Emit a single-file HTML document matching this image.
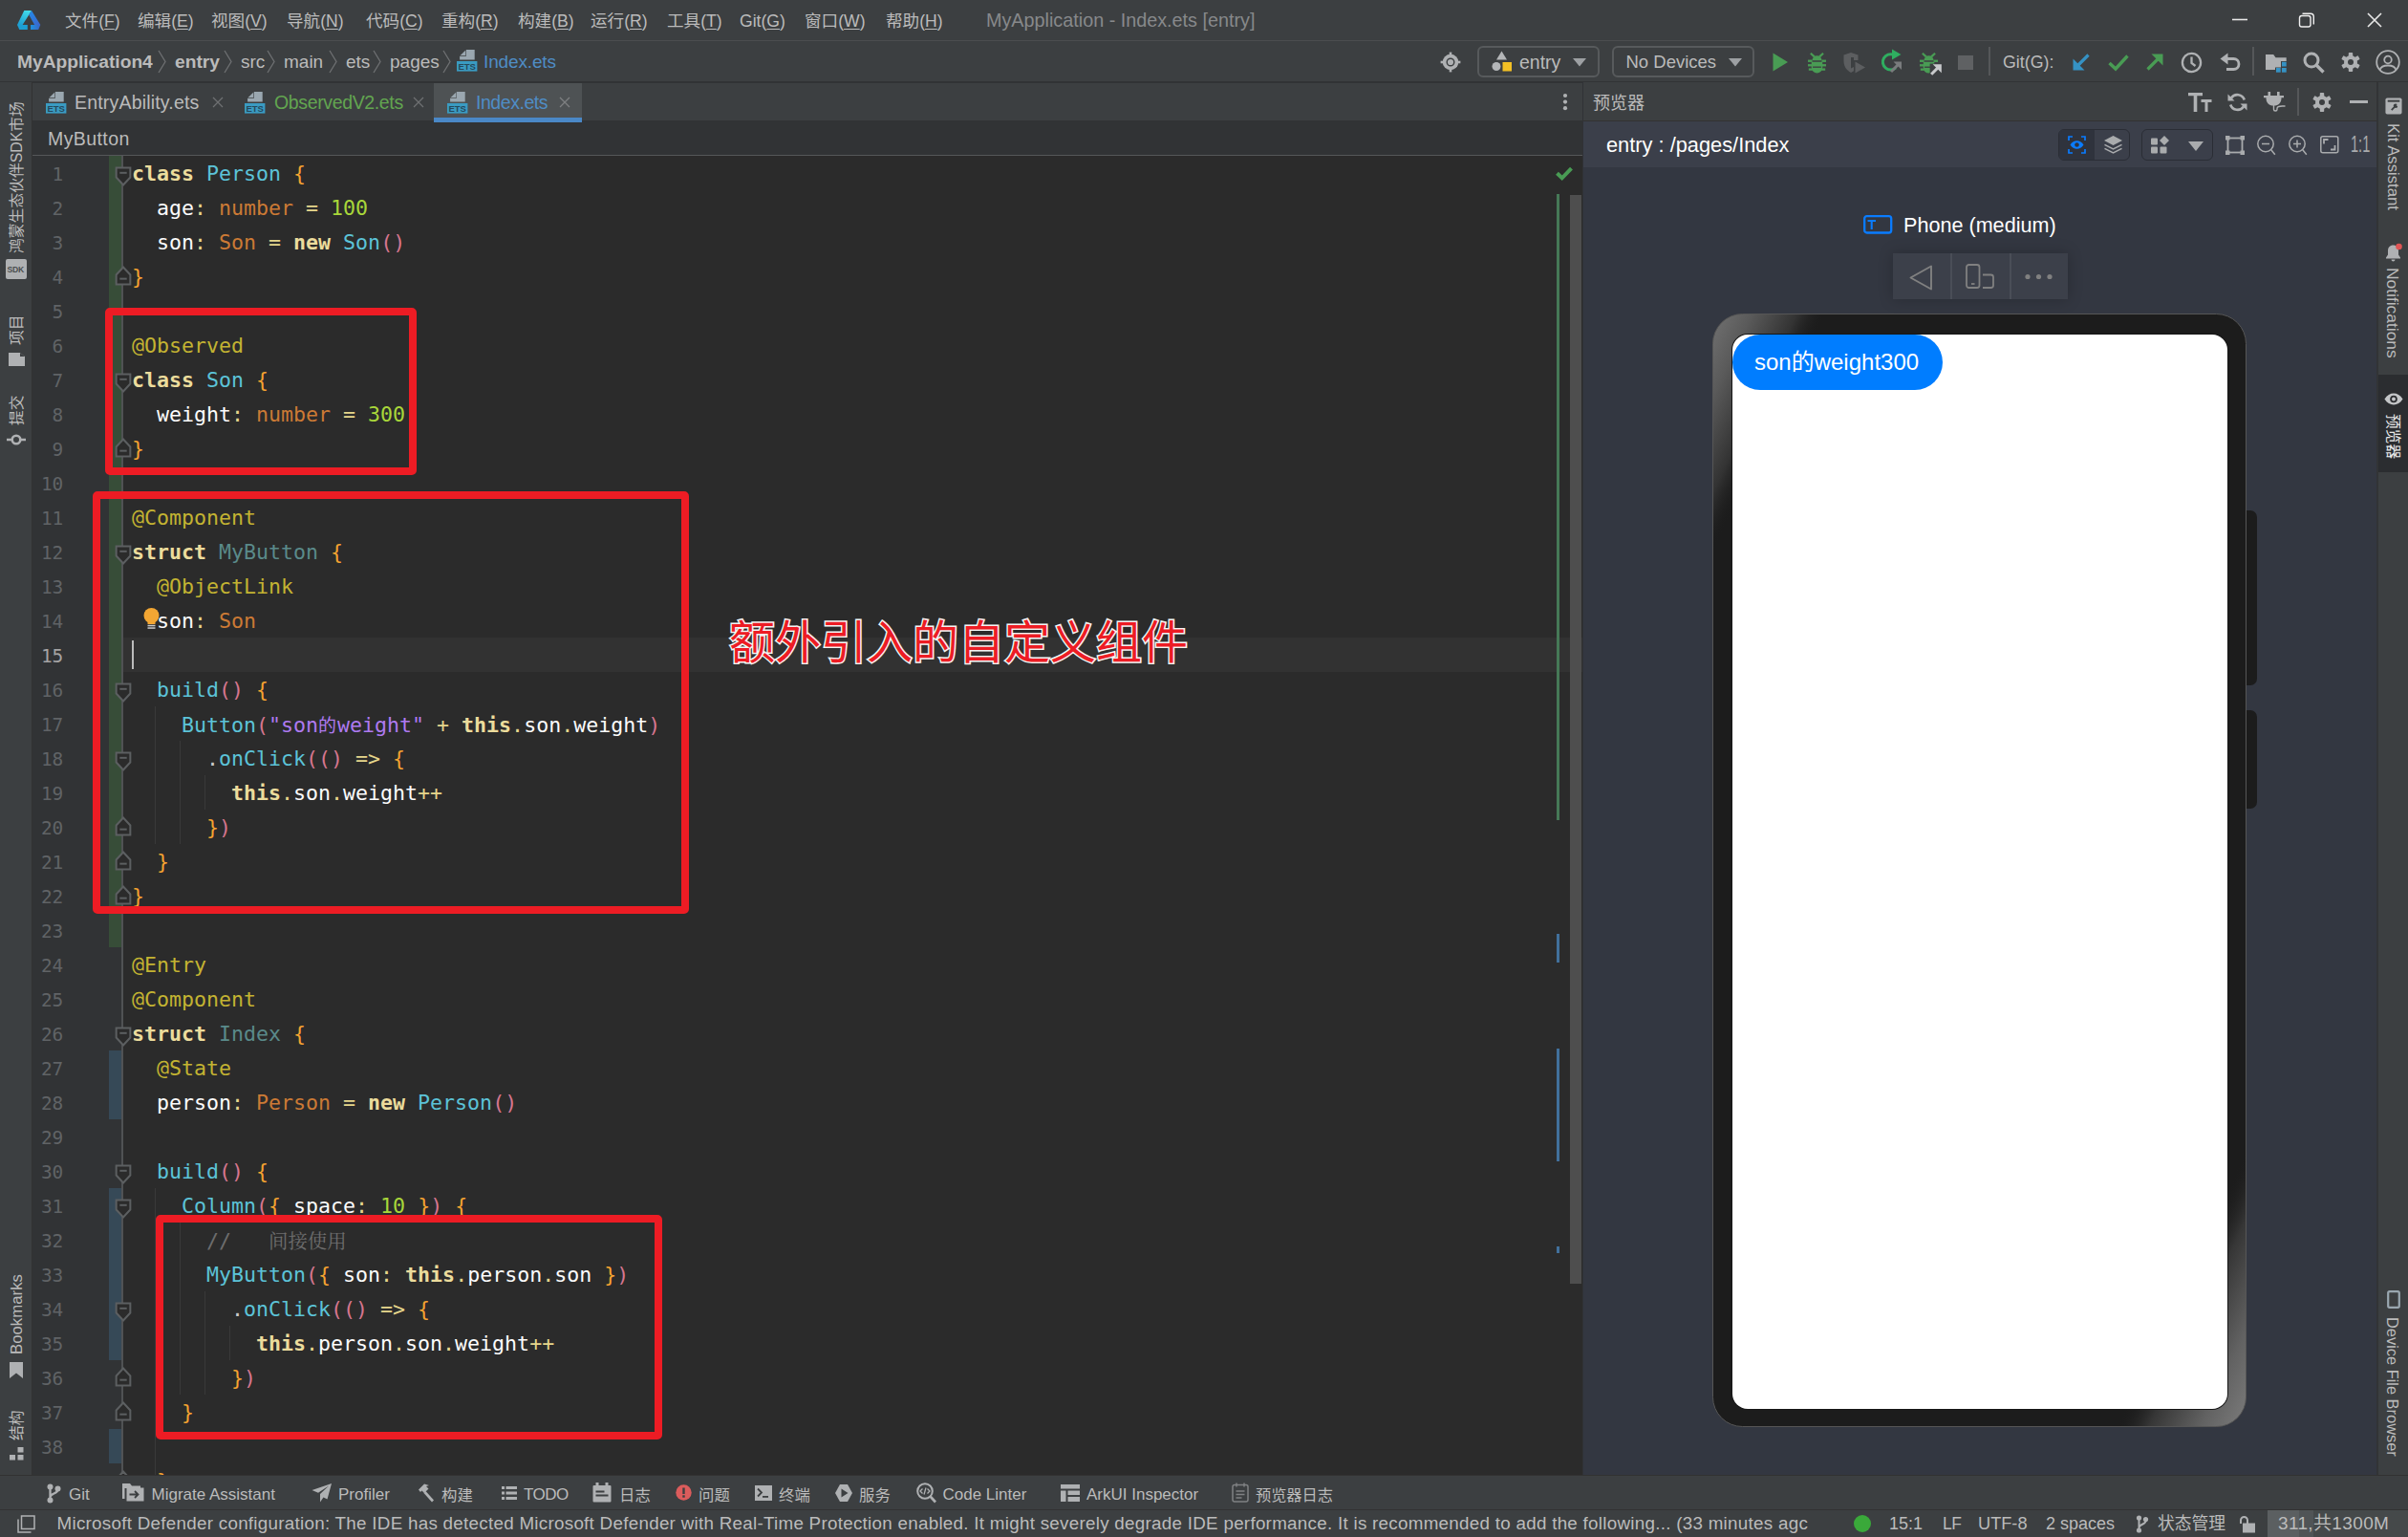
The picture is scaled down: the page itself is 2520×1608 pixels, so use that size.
<!DOCTYPE html>
<html lang="zh">
<head>
<meta charset="utf-8">
<title>MyApplication - Index.ets [entry]</title>
<style>
*{box-sizing:border-box}
html,body{margin:0;padding:0}
body{width:2520px;height:1608px;position:relative;overflow:hidden;background:#3c3f41;
 font-family:"Liberation Sans","Noto Sans CJK SC",sans-serif;font-size:17px;color:#bbbbbb;}
.abs{position:absolute}
.t{position:absolute;white-space:nowrap;line-height:1}
svg{position:absolute;overflow:visible}
/* ---- top ---- */
#menubar{position:absolute;left:0;top:0;width:2520px;height:43px;background:#3c3f41;border-bottom:1px solid #4b4d4f}
#menubar .mi{position:absolute;top:10px;font-size:17.6px;line-height:24px;white-space:nowrap;color:#bbbbbb}
#menubar u{text-decoration-thickness:1px;text-underline-offset:2px}
#navbar{position:absolute;left:0;top:43px;width:2520px;height:44px;background:#3c3f41;border-bottom:2px solid #313335}
#navbar .bc{position:absolute;top:9.5px;font-size:19px;line-height:24px;white-space:nowrap;color:#bbbbbb}
.combo{position:absolute;top:5px;height:33px;border:2px solid #575a5c;border-radius:6px}
/* ---- left bar ---- */
#leftbar{position:absolute;left:0;top:86px;width:34px;height:1457px;background:#3c3f41;border-right:1px solid #323232}
.vt{position:absolute;white-space:nowrap;font-size:17px;line-height:20px;transform-origin:0 0;color:#bbbbbb}
/* ---- tabs ---- */
#tabs{position:absolute;left:34px;top:87px;width:1622px;height:39px;background:#3c3f41;}
#tabs .tt{position:absolute;top:8px;font-size:19.5px;line-height:24px;white-space:nowrap}
#crumb{position:absolute;left:34px;top:126px;width:1622px;height:37px;background:#313335;border-bottom:1px solid #555759}
/* ---- editor ---- */
#editor{position:absolute;left:0;top:0;width:1656px;height:1543px;overflow:hidden;pointer-events:none}
#edbg{position:absolute;left:34px;top:163px;width:1622px;height:1380px;background:#2b2b2b}
#gutter{position:absolute;left:34px;top:163px;width:94px;height:1380px;background:#313335}
.ln{position:absolute;left:138px;height:36px;line-height:36px;white-space:pre;font-family:"DejaVu Sans Mono","Liberation Mono","Noto Sans CJK SC",monospace;font-size:21.6px;color:#fcfcfc}
.num{position:absolute;left:34px;width:32.3px;text-align:right;height:36px;line-height:36px;font-family:"DejaVu Sans Mono","Liberation Mono",monospace;font-size:19.4px;color:#606366}
.num.cur{color:#a4a3a3}
.k{color:#ecdc9c;font-weight:bold}
.c{color:#5cc3d8}
.b{color:#f5a331}
.p{color:#d6768f}

.ty{color:#cc7a35}
.n{color:#a9d73a}
.d{color:#c3b332}
.s{color:#5a8a8a}
.o{color:#e6d68b}
.g{color:#c9c9c9}
.q{color:#ae7af0}
.qz{color:#ae7af0;display:inline-block;width:20px;font-size:19px;font-family:"Noto Sans CJK SC",sans-serif}
.m{color:#6d6d6d}
.mz{color:#6d6d6d;font-size:20.4px;font-family:"Noto Serif CJK SC","Noto Sans CJK SC",serif}
.fold{left:119.5px}
.guide{position:absolute;width:1px;background:#393939}
.redbox{position:absolute;border:8px solid #ed1c24;border-radius:5px}
/* ---- preview ---- */
#preview{position:absolute;left:1656px;top:86px;width:832px;height:1457px;background:#333741;font-family:"Liberation Sans","Noto Sans CJK SC",sans-serif}
/* ---- right bar ---- */
#rightbar{position:absolute;left:2486.500px;top:86px;width:33.500px;height:1457px;background:#3c3f41;border-left:2px solid #323436}
/* ---- bottom ---- */
#bottombar{position:absolute;left:0;top:1543px;width:2520px;height:36px;background:#3c3f41;border-top:1px solid #323232}
#bottombar .bt{position:absolute;top:9px;font-size:17px;line-height:22px;white-space:nowrap;color:#bbbbbb}
#statusbar{position:absolute;left:0;top:1579px;width:2520px;height:29px;background:#3c3f41;border-top:1px solid #323232}
#statusbar .st{position:absolute;top:3px;font-size:17.5px;line-height:22px;white-space:nowrap;color:#bbbbbb}
</style>
</head>

<body>
<!-- ================= MENU BAR ================= -->
<div id="menubar">
 <svg style="left:17.900px;top:10.800px" width="24.300" height="20.100" viewBox="0 0 24.300 20.100">
  <defs>
   <linearGradient id="lg1" x1="0.700" y1="0" x2="0.200" y2="1"><stop offset="0" stop-color="#42dcea"/><stop offset="1" stop-color="#1d9fd2"/></linearGradient>
   <linearGradient id="lg2" x1="0.200" y1="0" x2="0.800" y2="1"><stop offset="0" stop-color="#2389e6"/><stop offset="1" stop-color="#3b69d0"/></linearGradient>
   <linearGradient id="lg3" x1="0" y1="0" x2="1" y2="0"><stop offset="0" stop-color="#1f93e2"/><stop offset="1" stop-color="#3a63c6"/></linearGradient>
  </defs>
  <path d="M7.300 0H15L12.300 4.400L5.600 14.900H0z" fill="url(#lg1)"/>
  <path d="M15 0L24.300 14.900H18.100L12.300 4.400z" fill="url(#lg2)"/>
  <path d="M0 14.900H10.800V20.100H2.300z" fill="#1d9fd2"/>
  <path d="M14.050 14.900H24.300L22.200 20.100H14.050z" fill="url(#lg3)"/>
 </svg>
 <span class="mi" style="left:68px">文件(<u>F</u>)</span>
 <span class="mi" style="left:144px">编辑(<u>E</u>)</span>
 <span class="mi" style="left:221px">视图(<u>V</u>)</span>
 <span class="mi" style="left:300px">导航(<u>N</u>)</span>
 <span class="mi" style="left:383px">代码(<u>C</u>)</span>
 <span class="mi" style="left:462px">重构(<u>R</u>)</span>
 <span class="mi" style="left:542px">构建(<u>B</u>)</span>
 <span class="mi" style="left:618px">运行(<u>R</u>)</span>
 <span class="mi" style="left:698px">工具(<u>T</u>)</span>
 <span class="mi" style="left:774px">Git(<u>G</u>)</span>
 <span class="mi" style="left:842px">窗口(<u>W</u>)</span>
 <span class="mi" style="left:927px">帮助(<u>H</u>)</span>
 <span class="mi" id="wtitle" style="left:1032px;top:9px;color:#87898b;font-size:19.8px">MyApplication - Index.ets [entry]</span>
 <!-- window controls -->
 <svg style="left:2335px;top:12px" width="18" height="18" viewBox="0 0 18 18"><path d="M1 8.5h16" stroke="#e8e8e8" stroke-width="1.6"/></svg>
 <svg style="left:2404.500px;top:12px" width="18" height="18" viewBox="0 0 18 18" fill="none" stroke="#f0f0f0" stroke-width="1.400"><rect x="1.500" y="4.500" width="11.500" height="11.500" rx="2.300"/><path d="M4.500 2.200h8.500a3.300 3.300 0 0 1 3.300 3.300v8"/></svg>
 <svg style="left:2477px;top:12.500px" width="16" height="16" viewBox="0 0 16 16"><path d="M1 1l14 14M15 1L1 15" stroke="#e8e8e8" stroke-width="1.6"/></svg>
</div>

<!-- ================= NAV BAR ================= -->
<div id="navbar">
 <span class="bc" id="bc1" style="left:18px;font-weight:bold;font-size:19.2px">MyApplication4</span>
 <span class="bc" id="bc2" style="left:183px;font-weight:bold;font-size:19.2px">entry</span>
 <span class="bc" id="bc3" style="left:252px">src</span>
 <span class="bc" id="bc4" style="left:297px">main</span>
 <span class="bc" id="bc5" style="left:362px">ets</span>
 <span class="bc" id="bc6" style="left:408px">pages</span>
 <span class="bc" id="bc7" style="left:506px;color:#4f8dc6;letter-spacing:-0.14px">Index.ets</span>
 <!-- chevrons -->
 <svg style="left:0;top:0" width="480" height="43" viewBox="0 0 480 43" fill="none" stroke="#6e7072" stroke-width="1.3">
  <path d="M166 10l7 11.500l-7 11.500"/><path d="M235 10l7 11.500l-7 11.500"/><path d="M280 10l7 11.500l-7 11.500"/><path d="M345 10l7 11.500l-7 11.500"/><path d="M391 10l7 11.500l-7 11.500"/><path d="M464 10l7 11.500l-7 11.500"/>
 </svg>
 <!-- ETS file icon -->
 <svg style="left:478.0px;top:9.0px" width="21.400" height="22.600" viewBox="0 0 21.400 22.600"><path d="M9.900 0H18.700V10.500H3.100V6.700H9.900z" fill="#9aa7b0"/><path d="M3.700 6.100L9.300 0.600V6.100z" fill="#9aa7b0"/><rect x="0" y="12" width="21.400" height="10.600" fill="#3a9bc2"/><text x="10.700" y="21" font-family="Liberation Sans,sans-serif" font-size="9.800" font-weight="bold" fill="#25495b" text-anchor="middle" textLength="18.500" lengthAdjust="spacingAndGlyphs">ETS</text></svg>

 <!-- target icon -->
 <svg style="left:1506px;top:10px" width="24" height="24" viewBox="0 0 24 24"><g fill="#afb1b3"><circle cx="12" cy="12" r="8.300"/><rect x="10.700" y="1.600" width="2.600" height="4"/><rect x="10.700" y="18.400" width="2.600" height="4"/><rect x="1.600" y="10.700" width="4" height="2.600"/><rect x="18.400" y="10.700" width="4" height="2.600"/></g><circle cx="12" cy="12" r="3.800" fill="none" stroke="#3c3f41" stroke-width="1.400"/></svg>
 <!-- entry combo -->
 <div class="combo" style="left:1546px;width:128px">
  <svg style="left:12.500px;top:3px" width="22" height="22" viewBox="0 0 22 22"><path d="M10.500 0.500l5.500 9h-11z" fill="#b4b6b8"/><circle cx="5" cy="16.500" r="4.500" fill="#b4b6b8"/><rect x="11.500" y="12" width="9.500" height="9.500" fill="#f2c025"/></svg>
  <span class="t" id="cb1" style="left:42px;top:4px;font-size:19.5px;line-height:22px">entry</span>
  <svg style="left:97.500px;top:10.500px" width="14" height="9" viewBox="0 0 14 9"><path d="M0 0h14L7 8.500z" fill="#9da0a3"/></svg>
 </div>
 <!-- No Devices combo -->
 <div class="combo" style="left:1687px;width:149px">
  <span class="t" id="cb2" style="left:12.500px;top:4px;font-size:18.5px;line-height:22px">No Devices</span>
  <svg style="left:119.500px;top:10.500px" width="14" height="9" viewBox="0 0 14 9"><path d="M0 0h14L7 8.500z" fill="#9da0a3"/></svg>
 </div>
 <!-- run -->
 <svg style="left:1855px;top:12px" width="17" height="20" viewBox="0 0 17 20"><path d="M0.500 0.500L16 10 0.500 19.500z" fill="#499c54"/></svg>
 <!-- debug bug -->
 <svg style="left:1891.500px;top:11.500px" width="19" height="21.500" viewBox="0 0 18.800 21.300" fill="#499c54"><path d="M2.800 0.700L6.700 4.300M15.900 0.700L12 4.300" stroke="#499c54" stroke-width="2.200" fill="none"/><path d="M4.400 8.200a5 5 0 0 1 10 0z"/><path d="M3.700 9.600h11.400v6a5.700 5.700 0 0 1-11.400 0z"/><rect x="0" y="7.500" width="4.500" height="2.300"/><rect x="14.300" y="7.500" width="4.500" height="2.300"/><rect x="0" y="12" width="4.500" height="2.300"/><rect x="14.300" y="12" width="4.500" height="2.300"/><rect x="0.800" y="16.300" width="4" height="2.300"/><rect x="14" y="16.300" width="4" height="2.300"/><rect x="5" y="14.400" width="8.800" height="1.300" fill="#3c3f41"/></svg>
 <!-- coverage (disabled) -->
 <svg style="left:1929px;top:12px" width="24" height="22" viewBox="0 0 24 22" fill="#5c5e60"><path d="M0.500 2.500L8 0l7.500 2.500v5.500h-4.500v-3h-3v11.500l3 -1.500v4.200l-3 1.800C3.500 18.500 0.500 14.500 0.500 9z"/><path d="M12.500 9.500L23 15.500 12.500 21.500z"/></svg>
 <!-- reload/run with arrow -->
 <svg style="left:1967px;top:8px" width="24" height="26" viewBox="0 0 24 26" fill="none"><path d="M14.500 6.200A8.200 8.200 0 1 0 17 20" stroke="#2fae60" stroke-width="3"/><path d="M13 0.500L22.500 6 13 11.500z" fill="#2fae60"/><path d="M12 24l8.500-8.500" stroke="#7a7c7e" stroke-width="3"/><path d="M14.500 13.500h8.500v8.500z" fill="#7a7c7e"/></svg>
 <!-- bug with arrow -->
 <svg style="left:2009px;top:11.500px" width="24" height="24" viewBox="0 0 23.700 23.700" fill="#499c54"><path d="M2.800 0.700L6.700 4.300M15.900 0.700L12 4.300" stroke="#499c54" stroke-width="2.200" fill="none"/><path d="M4.400 8.200a5 5 0 0 1 10 0z"/><path d="M3.700 9.600h11.400v6a5.700 5.700 0 0 1-11.400 0z"/><rect x="0" y="7.500" width="4.500" height="2.300"/><rect x="14.300" y="7.500" width="4.500" height="2.300"/><rect x="0" y="12" width="4.500" height="2.300"/><rect x="14.300" y="12" width="4.500" height="2.300"/><rect x="0.800" y="16.300" width="4" height="2.300"/><rect x="14" y="16.300" width="4" height="2.300"/><rect x="5" y="14.400" width="8.800" height="1.300" fill="#3c3f41"/><rect x="10.500" y="11.500" width="13.500" height="12.500" fill="#3c3f41"/><path d="M12 22.500l8-8" stroke="#c8cacc" stroke-width="3"/><path d="M13.500 12h9v9z" fill="#c8cacc"/></svg>
 <!-- stop -->
 <div class="abs" style="left:2049px;top:15px;width:16px;height:15px;background:#5f6163"></div>
 <div class="abs" style="left:2081px;top:6px;width:2px;height:30px;background:#555759"></div>
 <span class="bc" id="gitg" style="left:2096px;font-size:17.8px">Git(G):</span>
 <!-- git icons -->
 <svg style="left:2169px;top:13px" width="18" height="18" viewBox="0 0 18 18"><path d="M16.500 1.500L4 14" stroke="#3592c4" stroke-width="3.200" fill="none"/><path d="M0.500 5.500v12h12z" fill="#3592c4"/></svg>
 <svg style="left:2206px;top:14px" width="22" height="17" viewBox="0 0 22 17"><path d="M1.500 9l6.500 6L20.500 1.500" stroke="#499c54" stroke-width="3.400" fill="none"/></svg>
 <svg style="left:2246px;top:13px" width="18" height="18" viewBox="0 0 18 18"><path d="M1.500 16.500L14 4" stroke="#499c54" stroke-width="3.200" fill="none"/><path d="M5.500 0.500h12v12z" fill="#499c54"/></svg>
 <svg style="left:2282px;top:11px" width="23" height="23" viewBox="0 0 23 23" fill="none" stroke="#afb1b3"><circle cx="11.500" cy="11.500" r="9.600" stroke-width="2.300"/><path d="M11.500 5.500v6.500l4 3" stroke-width="2.300"/></svg>
 <svg style="left:2323px;top:12px" width="22" height="21" viewBox="0 0 22 21" fill="none"><path d="M6 6.500h8.500a5.500 5.500 0 0 1 0 11H7" stroke="#afb1b3" stroke-width="2.800"/><path d="M8.500 0.500v12L0.500 6.500z" fill="#afb1b3"/></svg>
 <div class="abs" style="left:2357px;top:6px;width:2px;height:30px;background:#555759"></div>
 <!-- project structure folder -->
 <svg style="left:2371px;top:13px" width="22" height="20" viewBox="0 0 22 20"><path d="M0 1h8.200l2.300 3.200h11.200v3.800h-5.700v6.500h-6v2.500H0z" fill="#afb1b3"/><rect x="17" y="8.800" width="4.700" height="4.700" fill="#3592c4"/><rect x="11" y="15" width="4.700" height="4.700" fill="#3592c4"/><rect x="17" y="15" width="4.700" height="4.700" fill="#3592c4"/></svg>
 <!-- search -->
 <svg style="left:2410px;top:11px" width="23" height="23" viewBox="0 0 23 23" fill="none" stroke="#afb1b3"><circle cx="9" cy="9" r="7" stroke-width="3"/><path d="M14 14l7.500 7.500" stroke-width="3.400"/></svg>
 <!-- gear -->
 <svg class="gear" style="left:2450px;top:12px" width="20" height="20" viewBox="0 0 20 20"><g fill="#afb1b3"><circle cx="10" cy="10" r="7"/><g id="gt"><rect x="7.800" y="0" width="4.400" height="20" rx="0.800"/><rect x="7.800" y="0" width="4.400" height="20" rx="0.800" transform="rotate(60 10 10)"/><rect x="7.800" y="0" width="4.400" height="20" rx="0.800" transform="rotate(120 10 10)"/></g></g><circle cx="10" cy="10" r="3" fill="#3c3f41"/></svg>
 <!-- user -->
 <svg style="left:2486px;top:9px" width="26" height="26" viewBox="0 0 26 26" fill="none" stroke="#afb1b3" stroke-width="1.800"><circle cx="13" cy="13" r="11.800"/><circle cx="13" cy="10.500" r="3.800"/><path d="M4.500 21c1-3 4-4.500 8.500-4.500s7.500 1.500 8.500 4.500"/></svg>
</div>

<!-- ================= TABS ================= -->
<div id="tabs">
 <div class="abs" style="left:420px;top:0;width:155px;height:39px;background:#4e5254"></div>
 <div class="abs" style="left:420px;top:36px;width:155px;height:5px;background:#4a88c7;z-index:3"></div>
 <svg style="left:14.0px;top:9.0px" width="21.400" height="22.600" viewBox="0 0 21.400 22.600"><path d="M9.900 0H18.700V10.500H3.100V6.700H9.900z" fill="#9aa7b0"/><path d="M3.700 6.100L9.300 0.600V6.100z" fill="#9aa7b0"/><rect x="0" y="12" width="21.400" height="10.600" fill="#3a9bc2"/><text x="10.700" y="21" font-family="Liberation Sans,sans-serif" font-size="9.800" font-weight="bold" fill="#25495b" text-anchor="middle" textLength="18.500" lengthAdjust="spacingAndGlyphs">ETS</text></svg>
 <span class="tt" id="tab1" style="left:44px;letter-spacing:0.19px;color:#bbbbbb">EntryAbility.ets</span>
 <svg style="left:187.500px;top:14px" width="12" height="12" viewBox="0 0 12 12"><path d="M1 1l10 10M11 1L1 11" stroke="#6e7072" stroke-width="1.300"/></svg>
 <svg style="left:222.0px;top:9.0px" width="21.400" height="22.600" viewBox="0 0 21.400 22.600"><path d="M9.900 0H18.700V10.500H3.100V6.700H9.900z" fill="#9aa7b0"/><path d="M3.700 6.100L9.300 0.600V6.100z" fill="#9aa7b0"/><rect x="0" y="12" width="21.400" height="10.600" fill="#3a9bc2"/><text x="10.700" y="21" font-family="Liberation Sans,sans-serif" font-size="9.800" font-weight="bold" fill="#25495b" text-anchor="middle" textLength="18.500" lengthAdjust="spacingAndGlyphs">ETS</text></svg>
 <span class="tt" id="tab2" style="left:253px;letter-spacing:-0.36px;color:#62a550">ObservedV2.ets</span>
 <svg style="left:398px;top:14px" width="12" height="12" viewBox="0 0 12 12"><path d="M1 1l10 10M11 1L1 11" stroke="#6e7072" stroke-width="1.300"/></svg>
 <svg style="left:434.0px;top:9.0px" width="21.400" height="22.600" viewBox="0 0 21.400 22.600"><path d="M9.900 0H18.700V10.500H3.100V6.700H9.900z" fill="#9aa7b0"/><path d="M3.700 6.100L9.300 0.600V6.100z" fill="#9aa7b0"/><rect x="0" y="12" width="21.400" height="10.600" fill="#3a9bc2"/><text x="10.700" y="21" font-family="Liberation Sans,sans-serif" font-size="9.800" font-weight="bold" fill="#25495b" text-anchor="middle" textLength="18.500" lengthAdjust="spacingAndGlyphs">ETS</text></svg>
 <span class="tt" id="tab3" style="left:464px;letter-spacing:-0.45px;color:#4f8dc6">Index.ets</span>
 <svg style="left:551px;top:14px" width="12" height="12" viewBox="0 0 12 12"><path d="M1 1l10 10M11 1L1 11" stroke="#7e8082" stroke-width="1.300"/></svg>
 <!-- kebab -->
 <svg style="left:1600.800px;top:10.200px" width="6" height="20" viewBox="0 0 6 20" fill="#afb1b3"><circle cx="3" cy="3" r="2.100"/><circle cx="3" cy="9.600" r="2.100"/><circle cx="3" cy="16.200" r="2.100"/></svg>
</div>
<div id="crumb"><span class="t" id="crumbt" style="left:16px;top:8px;font-size:19.5px;letter-spacing:0.42px;line-height:22px;color:#bbbbbb">MyButton</span></div>

<!-- ================= LEFT TOOL STRIP ================= -->
<div id="leftbar">
 <!-- texts rotated -90deg (reading bottom→top). top values are relative to leftbar (page y - 86) -->
 <span class="vt" id="lv1" style="left:8px;top:179px;transform:rotate(-90deg);font-size:15.8px">鸿蒙生态伙伴SDK市场</span>
 <div class="abs" style="left:6px;top:185px;width:22px;height:21px;background:#afb1b3;border-radius:2px"></div>
 <span class="t" style="left:7.5px;top:191px;font-size:8.6px;font-weight:bold;color:#4a4d4f;line-height:10px;letter-spacing:-0.2px">SDK</span>
 <span class="vt" id="lv2" style="left:8px;top:275px;transform:rotate(-90deg);font-size:15.8px">项目</span>
 <svg style="left:9px;top:283px" width="17" height="14" viewBox="0 0 17 14"><path d="M0 0h12l5 4v10H0z" fill="#afb1b3"/><path d="M12 0v4h5z" fill="#3c3f41"/></svg>
 <span class="vt" id="lv3" style="left:8px;top:359px;transform:rotate(-90deg);font-size:15.8px">提交</span>
 <svg style="left:7px;top:364px" width="20" height="20" viewBox="0 0 20 20" fill="none" stroke="#afb1b3"><circle cx="10" cy="10" r="4.300" stroke-width="2.600"/><path d="M0 10h5.500M14.500 10H20" stroke-width="2.600"/></svg>

 <span class="vt" id="lv4" style="left:8px;top:1331px;transform:rotate(-90deg);font-size:16.8px">Bookmarks</span>
 <svg style="left:10px;top:1339px" width="14" height="17" viewBox="0 0 14 17"><path d="M0 0h14v17l-7-5.500L0 17z" fill="#afb1b3"/></svg>
 <span class="vt" id="lv5" style="left:8px;top:1421px;transform:rotate(-90deg);font-size:15.8px">结构</span>
 <svg style="left:10px;top:1428px" width="15" height="14" viewBox="0 0 15 14" fill="#afb1b3"><rect x="8.500" y="0" width="6" height="5.500"/><rect x="0" y="8" width="6" height="5.500"/><rect x="8.500" y="8" width="6" height="5.500"/></svg>
</div>

<div id="editor">
<div id="edbg"></div>
<div id="gutter"></div>
<!-- change markers in gutter -->
<div class="abs" style="left:114px;top:163px;width:13px;height:828px;background:#374d38"></div>
<div class="abs" style="left:114px;top:1099px;width:13px;height:72px;background:#364957"></div>
<div class="abs" style="left:114px;top:1243px;width:13px;height:180px;background:#364957"></div>
<div class="abs" style="left:114px;top:1495px;width:13px;height:36px;background:#364957"></div>
<div class="num" style="top:164.5px">1</div>
<div class="num" style="top:200.5px">2</div>
<div class="num" style="top:236.5px">3</div>
<div class="num" style="top:272.5px">4</div>
<div class="num" style="top:308.5px">5</div>
<div class="num" style="top:344.5px">6</div>
<div class="num" style="top:380.5px">7</div>
<div class="num" style="top:416.5px">8</div>
<div class="num" style="top:452.5px">9</div>
<div class="num" style="top:488.5px">10</div>
<div class="num" style="top:524.5px">11</div>
<div class="num" style="top:560.5px">12</div>
<div class="num" style="top:596.5px">13</div>
<div class="num" style="top:632.5px">14</div>
<div class="num cur" style="top:668.5px">15</div>
<div class="num" style="top:704.5px">16</div>
<div class="num" style="top:740.5px">17</div>
<div class="num" style="top:776.5px">18</div>
<div class="num" style="top:812.5px">19</div>
<div class="num" style="top:848.5px">20</div>
<div class="num" style="top:884.5px">21</div>
<div class="num" style="top:920.5px">22</div>
<div class="num" style="top:956.5px">23</div>
<div class="num" style="top:992.5px">24</div>
<div class="num" style="top:1028.5px">25</div>
<div class="num" style="top:1064.5px">26</div>
<div class="num" style="top:1100.5px">27</div>
<div class="num" style="top:1136.5px">28</div>
<div class="num" style="top:1172.5px">29</div>
<div class="num" style="top:1208.5px">30</div>
<div class="num" style="top:1244.5px">31</div>
<div class="num" style="top:1280.5px">32</div>
<div class="num" style="top:1316.5px">33</div>
<div class="num" style="top:1352.5px">34</div>
<div class="num" style="top:1388.5px">35</div>
<div class="num" style="top:1424.5px">36</div>
<div class="num" style="top:1460.5px">37</div>
<div class="num" style="top:1496.5px">38</div>
<!-- fold line -->
<div class="abs" style="left:127px;top:163px;width:2px;height:1380px;background:#505254"></div>
<!-- current line -->
<div class="abs" style="left:129px;top:667px;width:1527px;height:36px;background:#323232"></div>
<!-- indent guides -->
<div class="guide" style="left:162px;top:739px;height:36px"></div>
<div class="guide" style="left:162px;top:775px;height:108px"></div>
<div class="guide" style="left:188px;top:775px;height:108px"></div>
<div class="guide" style="left:214px;top:811px;height:36px"></div>
<div class="guide" style="left:162px;top:1243px;height:300px"></div>
<div class="guide" style="left:188px;top:1279px;height:180px"></div>
<div class="guide" style="left:214px;top:1351px;height:108px"></div>
<div class="guide" style="left:240px;top:1387px;height:36px"></div>
<div class="ln" style="top:164.3px"><span class="k">class</span> <span class="c">Person</span> <span class="b">{</span></div>
<div class="ln" style="top:200.3px">  age<span class="o">:</span> <span class="ty">number</span><span class="o"> = </span><span class="n">100</span></div>
<div class="ln" style="top:236.3px">  son<span class="o">:</span> <span class="ty">Son</span><span class="o"> = </span><span class="k">new</span> <span class="c">Son</span><span class="p">()</span></div>
<div class="ln" style="top:272.3px"><span class="b">}</span></div>
<div class="ln" style="top:308.3px"></div>
<div class="ln" style="top:344.3px"><span class="d">@Observed</span></div>
<div class="ln" style="top:380.3px"><span class="k">class</span> <span class="c">Son</span> <span class="b">{</span></div>
<div class="ln" style="top:416.3px">  weight<span class="o">:</span> <span class="ty">number</span><span class="o"> = </span><span class="n">300</span></div>
<div class="ln" style="top:452.3px"><span class="b">}</span></div>
<div class="ln" style="top:488.3px"></div>
<div class="ln" style="top:524.3px"><span class="d">@Component</span></div>
<div class="ln" style="top:560.3px"><span class="k">struct</span> <span class="s">MyButton</span> <span class="b">{</span></div>
<div class="ln" style="top:596.3px">  <span class="d">@ObjectLink</span></div>
<div class="ln" style="top:632.3px">  son<span class="o">:</span> <span class="ty">Son</span></div>
<div class="ln" style="top:668.3px"></div>
<div class="ln" style="top:704.3px">  <span class="c">build</span><span class="p">()</span> <span class="b">{</span></div>
<div class="ln" style="top:740.3px">    <span class="c">Button</span><span class="p">(</span><span class="q">"son</span><span class="qz">的</span><span class="q">weight"</span><span class="o"> + </span><span class="k">this</span><span class="o">.</span>son<span class="o">.</span>weight<span class="p">)</span></div>
<div class="ln" style="top:776.3px">      <span class="g">.</span><span class="c">onClick</span><span class="p">(()</span><span class="o"> =&gt; </span><span class="b">{</span></div>
<div class="ln" style="top:812.3px">        <span class="k">this</span><span class="o">.</span>son<span class="o">.</span>weight<span class="o">++</span></div>
<div class="ln" style="top:848.3px">      <span class="b">}</span><span class="p">)</span></div>
<div class="ln" style="top:884.3px">  <span class="b">}</span></div>
<div class="ln" style="top:920.3px"><span class="b">}</span></div>
<div class="ln" style="top:956.3px"></div>
<div class="ln" style="top:992.3px"><span class="d">@Entry</span></div>
<div class="ln" style="top:1028.3px"><span class="d">@Component</span></div>
<div class="ln" style="top:1064.3px"><span class="k">struct</span> <span class="s">Index</span> <span class="b">{</span></div>
<div class="ln" style="top:1100.3px">  <span class="d">@State</span></div>
<div class="ln" style="top:1136.3px">  person<span class="o">:</span> <span class="ty">Person</span><span class="o"> = </span><span class="k">new</span> <span class="c">Person</span><span class="p">()</span></div>
<div class="ln" style="top:1172.3px"></div>
<div class="ln" style="top:1208.3px">  <span class="c">build</span><span class="p">()</span> <span class="b">{</span></div>
<div class="ln" style="top:1244.3px">    <span class="c">Column</span><span class="p">(</span><span class="b">{</span> space<span class="o">:</span> <span class="n">10</span> <span class="b">}</span><span class="p">)</span> <span class="b">{</span></div>
<div class="ln" style="top:1280.3px">      <span class="m">//   </span><span class="mz">间接使用</span></div>
<div class="ln" style="top:1316.3px">      <span class="c">MyButton</span><span class="p">(</span><span class="b">{</span> son<span class="o">:</span> <span class="k">this</span><span class="o">.</span>person<span class="o">.</span>son <span class="b">}</span><span class="p">)</span></div>
<div class="ln" style="top:1352.3px">        <span class="g">.</span><span class="c">onClick</span><span class="p">(()</span><span class="o"> =&gt; </span><span class="b">{</span></div>
<div class="ln" style="top:1388.3px">          <span class="k">this</span><span class="o">.</span>person<span class="o">.</span>son<span class="o">.</span>weight<span class="o">++</span></div>
<div class="ln" style="top:1424.3px">        <span class="b">}</span><span class="p">)</span></div>
<div class="ln" style="top:1460.3px">    <span class="b">}</span></div>
<div class="ln" style="top:1496.3px"></div>
<div class="ln" style="top:1532.3px">  <span class="b">}</span></div>
<svg class="fold" style="top:174px" width="18" height="21" viewBox="0 0 17 20"><path d="M1.5 1.5h14v9.5l-7 7.5l-7-7.5z" fill="#2b2b2b" stroke="#5c5f61" stroke-width="1.9"/><path d="M5 6.5h7" stroke="#5c5f61" stroke-width="1.9"/></svg>
<svg class="fold" style="top:390px" width="18" height="21" viewBox="0 0 17 20"><path d="M1.5 1.5h14v9.5l-7 7.5l-7-7.5z" fill="#2b2b2b" stroke="#5c5f61" stroke-width="1.9"/><path d="M5 6.5h7" stroke="#5c5f61" stroke-width="1.9"/></svg>
<svg class="fold" style="top:570px" width="18" height="21" viewBox="0 0 17 20"><path d="M1.5 1.5h14v9.5l-7 7.5l-7-7.5z" fill="#2b2b2b" stroke="#5c5f61" stroke-width="1.9"/><path d="M5 6.5h7" stroke="#5c5f61" stroke-width="1.9"/></svg>
<svg class="fold" style="top:714px" width="18" height="21" viewBox="0 0 17 20"><path d="M1.5 1.5h14v9.5l-7 7.5l-7-7.5z" fill="#2b2b2b" stroke="#5c5f61" stroke-width="1.9"/><path d="M5 6.5h7" stroke="#5c5f61" stroke-width="1.9"/></svg>
<svg class="fold" style="top:786px" width="18" height="21" viewBox="0 0 17 20"><path d="M1.5 1.5h14v9.5l-7 7.5l-7-7.5z" fill="#2b2b2b" stroke="#5c5f61" stroke-width="1.9"/><path d="M5 6.5h7" stroke="#5c5f61" stroke-width="1.9"/></svg>
<svg class="fold" style="top:1074px" width="18" height="21" viewBox="0 0 17 20"><path d="M1.5 1.5h14v9.5l-7 7.5l-7-7.5z" fill="#2b2b2b" stroke="#5c5f61" stroke-width="1.9"/><path d="M5 6.5h7" stroke="#5c5f61" stroke-width="1.9"/></svg>
<svg class="fold" style="top:1218px" width="18" height="21" viewBox="0 0 17 20"><path d="M1.5 1.5h14v9.5l-7 7.5l-7-7.5z" fill="#2b2b2b" stroke="#5c5f61" stroke-width="1.9"/><path d="M5 6.5h7" stroke="#5c5f61" stroke-width="1.9"/></svg>
<svg class="fold" style="top:1254px" width="18" height="21" viewBox="0 0 17 20"><path d="M1.5 1.5h14v9.5l-7 7.5l-7-7.5z" fill="#2b2b2b" stroke="#5c5f61" stroke-width="1.9"/><path d="M5 6.5h7" stroke="#5c5f61" stroke-width="1.9"/></svg>
<svg class="fold" style="top:1362px" width="18" height="21" viewBox="0 0 17 20"><path d="M1.5 1.5h14v9.5l-7 7.5l-7-7.5z" fill="#2b2b2b" stroke="#5c5f61" stroke-width="1.9"/><path d="M5 6.5h7" stroke="#5c5f61" stroke-width="1.9"/></svg>
<svg class="fold" style="top:278px" width="18" height="21" viewBox="0 0 17 20"><path d="M1.5 18.5h14v-9.5l-7-7.5l-7 7.5z" fill="#2b2b2b" stroke="#5c5f61" stroke-width="1.9"/><path d="M5 13h7" stroke="#5c5f61" stroke-width="1.9"/></svg>
<svg class="fold" style="top:458px" width="18" height="21" viewBox="0 0 17 20"><path d="M1.5 18.5h14v-9.5l-7-7.5l-7 7.5z" fill="#2b2b2b" stroke="#5c5f61" stroke-width="1.9"/><path d="M5 13h7" stroke="#5c5f61" stroke-width="1.9"/></svg>
<svg class="fold" style="top:854px" width="18" height="21" viewBox="0 0 17 20"><path d="M1.5 18.5h14v-9.5l-7-7.5l-7 7.5z" fill="#2b2b2b" stroke="#5c5f61" stroke-width="1.9"/><path d="M5 13h7" stroke="#5c5f61" stroke-width="1.9"/></svg>
<svg class="fold" style="top:890px" width="18" height="21" viewBox="0 0 17 20"><path d="M1.5 18.5h14v-9.5l-7-7.5l-7 7.5z" fill="#2b2b2b" stroke="#5c5f61" stroke-width="1.9"/><path d="M5 13h7" stroke="#5c5f61" stroke-width="1.9"/></svg>
<svg class="fold" style="top:926px" width="18" height="21" viewBox="0 0 17 20"><path d="M1.5 18.5h14v-9.5l-7-7.5l-7 7.5z" fill="#2b2b2b" stroke="#5c5f61" stroke-width="1.9"/><path d="M5 13h7" stroke="#5c5f61" stroke-width="1.9"/></svg>
<svg class="fold" style="top:1430px" width="18" height="21" viewBox="0 0 17 20"><path d="M1.5 18.5h14v-9.5l-7-7.5l-7 7.5z" fill="#2b2b2b" stroke="#5c5f61" stroke-width="1.9"/><path d="M5 13h7" stroke="#5c5f61" stroke-width="1.9"/></svg>
<svg class="fold" style="top:1466px" width="18" height="21" viewBox="0 0 17 20"><path d="M1.5 18.5h14v-9.5l-7-7.5l-7 7.5z" fill="#2b2b2b" stroke="#5c5f61" stroke-width="1.9"/><path d="M5 13h7" stroke="#5c5f61" stroke-width="1.9"/></svg>
<svg class="fold" style="top:1538px" width="18" height="21" viewBox="0 0 17 20"><path d="M1.5 18.5h14v-9.5l-7-7.5l-7 7.5z" fill="#2b2b2b" stroke="#5c5f61" stroke-width="1.9"/><path d="M5 13h7" stroke="#5c5f61" stroke-width="1.9"/></svg>
<!-- caret -->
<div class="abs" style="left:138px;top:670px;width:2px;height:30px;background:#bbbbbb"></div>
<!-- bulb -->
<svg style="left:150px;top:636px" width="17" height="22" viewBox="0 0 17 22"><circle cx="8.500" cy="8" r="8" fill="#f2a633"/><rect x="4.500" y="14" width="8" height="3" fill="#f2a633"/><rect x="4.500" y="17.800" width="8" height="1.500" fill="#c9c9c9"/><rect x="4.500" y="20.300" width="8" height="1.500" fill="#c9c9c9"/></svg>
<!-- scrollbar + stripes -->
<div class="abs" style="left:1643px;top:204px;width:12px;height:1139px;background:#4e4e4e"></div>
<div class="abs" style="left:1629px;top:203px;width:3px;height:655px;background:#467957"></div>
<div class="abs" style="left:1629px;top:977px;width:3px;height:30px;background:#41709c"></div>
<div class="abs" style="left:1629px;top:1097px;width:3px;height:118px;background:#41709c"></div>
<div class="abs" style="left:1629px;top:1304px;width:3px;height:7px;background:#41709c"></div>
<svg style="left:1627.500px;top:173.800px" width="18" height="15" viewBox="0 0 18 15"><path d="M1.500 7.300l5.200 5L16.500 2.200" stroke="#499c54" stroke-width="4" fill="none"/></svg>
<!-- red annotation boxes -->
<div class="redbox" style="left:110px;top:322px;width:326px;height:175px"></div>
<div class="redbox" style="left:97px;top:514px;width:624px;height:442px"></div>
<div class="redbox" style="left:163px;top:1271px;width:530px;height:235px"></div>
<div class="abs" id="redtxt" style="left:763px;top:634.5px;font-size:48px;line-height:66px;white-space:nowrap;color:#ed1c24;font-family:'Noto Sans CJK SC',sans-serif;-webkit-text-stroke:3px #f4f4f4;paint-order:stroke fill">额外引入的自定义组件</div>

</div>
<!-- ================= PREVIEWER ================= -->
<div id="preview">
 <div class="abs" style="left:0;top:0;width:1px;height:1457px;background:#303236;z-index:5"></div>
 <!-- header -->
 <div class="abs" style="left:0;top:0;width:832px;height:41px;background:#3c3f41;border-left:1px solid #323232;border-bottom:1px solid #323232">
  <span class="t" id="pvt" style="left:10px;top:10.5px;font-size:18px;line-height:22px;color:#bbbbbb">预览器</span>
  <!-- Tt -->
  <svg style="left:633px;top:11px" width="25" height="20" viewBox="0 0 25 20" fill="#afb1b3"><path d="M0 0h15v3.200H9.300V20H5.700V3.200H0z"/><path d="M13.500 7h11v3h-4v10h-3V10h-4z"/></svg>
  <!-- refresh -->
  <svg style="left:674px;top:11px" width="21" height="20" viewBox="0 0 21 20" fill="none"><path d="M17.800 7.500A7.800 7.800 0 0 0 4 5.500" stroke="#afb1b3" stroke-width="2.600"/><path d="M3.200 12.500A7.800 7.800 0 0 0 17 14.500" stroke="#afb1b3" stroke-width="2.600"/><path d="M0.500 1.500v7h7z" fill="#afb1b3"/><path d="M20.500 18.500v-7h-7z" fill="#afb1b3"/></svg>
  <!-- plug -->
  <svg style="left:712px;top:10px" width="23" height="22" viewBox="0 0 23 22" fill="none"><path d="M0 4h21v2.200h-2.500c0 5-2.500 8.300-8 8.300s-8-3.300-8-8.300H0z" fill="#afb1b3"/><rect x="4.500" y="0" width="2.600" height="5" fill="#afb1b3"/><rect x="14" y="0" width="2.600" height="5" fill="#afb1b3"/><path d="M10.500 14v4.500c0 2 3.500 2 3.500 0v-1c0-2 3-2.500 5.500-2.500h3" stroke="#afb1b3" stroke-width="1.400"/></svg>
  <div class="abs" style="left:747px;top:6px;width:2px;height:29px;background:#555759"></div>
  <!-- gear -->
  <svg style="left:763px;top:11px" width="20" height="20" viewBox="0 0 20 20"><g fill="#afb1b3"><circle cx="10" cy="10" r="7"/><rect x="7.800" y="0" width="4.400" height="20" rx="0.800"/><rect x="7.800" y="0" width="4.400" height="20" rx="0.800" transform="rotate(60 10 10)"/><rect x="7.800" y="0" width="4.400" height="20" rx="0.800" transform="rotate(120 10 10)"/></g><circle cx="10" cy="10" r="3" fill="#3c3f41"/></svg>
  <div class="abs" style="left:802px;top:19px;width:19px;height:3px;background:#afb1b3"></div>
 </div>
 <!-- toolbar row -->
 <div class="abs" style="left:1px;top:41px;width:831px;height:48px;background:#3b3f4a">
  <span class="t" id="pvpath" style="left:24px;top:12px;font-size:21.8px;line-height:26px;color:#ffffff">entry : /pages/Index</span>
  <!-- group 1 -->
  <div class="abs" style="left:497px;top:8px;width:75px;height:33px;border:1px solid #2a2d35;border-radius:6px;background:#3b3f4a;overflow:hidden">
   <div class="abs" style="left:0;top:0;width:37px;height:31px;background:#2f333d"></div>
  </div>
  <svg style="left:507px;top:15px" width="19" height="19" viewBox="0 0 19 19" fill="none" stroke="#0a7cff" stroke-width="1.700"><path d="M1 5V1h4M14 1h4v4M18 14v4h-4M5 18H1v-4"/><path d="M2.500 9.500C4.500 6.500 6.800 5.200 9.500 5.200s5 1.300 7 4.300c-2 3-4.300 4.300-7 4.300s-5-1.300-7-4.300z" fill="#0a7cff" stroke="none"/><circle cx="9.500" cy="9.500" r="2.300" fill="#2f333d" stroke="none"/></svg>
  <svg style="left:544px;top:14px" width="21" height="21" viewBox="0 0 21 21" fill="none"><path d="M10.500 1L20 6l-9.500 5L1 6z" fill="#a9abad"/><path d="M1.500 10.300l9 4.700 9-4.700M1.500 14.300l9 4.700 9-4.700" stroke="#a9abad" stroke-width="1.500"/></svg>
  <!-- group 2 -->
  <div class="abs" style="left:584px;top:8px;width:75px;height:33px;border:1px solid #2a2d35;border-radius:6px"></div>
  <svg style="left:594px;top:15px" width="20" height="19" viewBox="0 0 20 19" fill="#a9abad"><rect x="0" y="2.500" width="7" height="7" rx="1"/><rect x="0" y="11.500" width="7" height="7" rx="1"/><rect x="9.500" y="11.500" width="7" height="7" rx="1"/><path d="M14 0l5 5-5 5-5-5z"/></svg>
  <svg style="left:633px;top:21px" width="16" height="10" viewBox="0 0 16 10"><path d="M0 0h16L8 10z" fill="#a9abad"/></svg>
  <!-- frame -->
  <svg style="left:672px;top:15px" width="20" height="20" viewBox="0 0 20 20" fill="none" stroke="#a9abad"><rect x="2.500" y="2.500" width="15" height="15" stroke-width="1.800"/><g fill="#a9abad" stroke="none"><rect x="0" y="0" width="4.500" height="4.500"/><rect x="15.500" y="0" width="4.500" height="4.500"/><rect x="0" y="15.500" width="4.500" height="4.500"/><rect x="15.500" y="15.500" width="4.500" height="4.500"/></g></svg>
  <!-- zoom out -->
  <svg style="left:705px;top:14px" width="20" height="22" viewBox="0 0 20 22" fill="none" stroke="#a9abad" stroke-width="1.500"><circle cx="9" cy="9.500" r="8.200"/><path d="M5 9.500h8M14.800 15.800l4 5"/></svg>
  <!-- zoom in -->
  <svg style="left:738px;top:14px" width="20" height="22" viewBox="0 0 20 22" fill="none" stroke="#a9abad" stroke-width="1.500"><circle cx="9" cy="9.500" r="8.200"/><path d="M5 9.500h8M9 5.500v8M14.800 15.800l4 5"/></svg>
  <!-- fit -->
  <svg style="left:771px;top:15px" width="20" height="19" viewBox="0 0 20 19" fill="none" stroke="#a9abad" stroke-width="1.500"><rect x="0.800" y="0.800" width="18" height="17" rx="2"/><path d="M4 8.500V4h4.500M15.500 10v4.500H11" stroke-width="1.800"/></svg>
  <span class="t" id="pv11" style="left:803px;top:12px;font-size:23.5px;line-height:24px;color:#a9abad;transform:scaleX(0.62);transform-origin:0 0">1:1</span>
 </div>
 <!-- device label -->
 <svg style="left:294px;top:138.500px" width="31" height="20" viewBox="0 0 31 20" fill="none" stroke="#0a7cff" stroke-width="2.300"><rect x="1.200" y="1.200" width="28" height="17.300" rx="2.500"/><path d="M4.500 6h8.500M8.700 6v9" stroke-width="2.100"/></svg>
 <span class="t" id="pvdev" style="left:336px;top:137px;font-size:21.600px;line-height:26px;color:#ffffff">Phone (medium)</span>
 <!-- control buttons -->
 <div class="abs" style="left:325px;top:179px;width:183px;height:48px;background:#3c404a;box-shadow:0 0 16px rgba(0,0,0,0.22)"></div>
 <div class="abs" style="left:385px;top:179px;width:1.500px;height:48px;background:#4a4e57"></div>
 <div class="abs" style="left:446.500px;top:179px;width:2px;height:48px;background:#4a4e57"></div>
 <svg style="left:342px;top:190.500px" width="25" height="27" viewBox="0 0 25 27" fill="none" stroke="#808080" stroke-width="1.900" stroke-linejoin="round"><path d="M23 1.500v24L1.500 13.500z"/></svg>
 <svg style="left:401px;top:190px" width="31" height="27" viewBox="0 0 31 27" fill="none" stroke="#808080" stroke-width="1.800"><rect x="1" y="1" width="13.500" height="24" rx="2.500"/><path d="M6 21h3.500"/><path d="M18 11.500h8.500a2.500 2.500 0 0 1 2.500 2.500v8.500a2.500 2.500 0 0 1-2.500 2.500H18"/></svg>
 <svg style="left:463px;top:200px" width="29" height="7" viewBox="0 0 29 7" fill="#808080"><circle cx="3" cy="3.500" r="2.600"/><circle cx="14.500" cy="3.500" r="2.600"/><circle cx="26" cy="3.500" r="2.600"/></svg>

 <!-- phone -->
 <div class="abs" style="left:695px;top:448px;width:11px;height:183px;background:#1c1c1c;border-radius:0 7px 7px 0"></div>
 <div class="abs" style="left:695px;top:657px;width:11px;height:103px;background:#1c1c1c;border-radius:0 7px 7px 0"></div>
 <svg id="phone" style="left:136px;top:242px" width="559" height="1165" viewBox="0 0 559 1165">
  <defs>
   <linearGradient id="pg1" gradientUnits="userSpaceOnUse" x1="0" y1="0" x2="97" y2="45.700">
    <stop offset="0" stop-color="#727272"/><stop offset="0.35" stop-color="#5a5a5a"/><stop offset="0.75" stop-color="#333333"/><stop offset="1" stop-color="#1c1c1c" stop-opacity="0"/>
   </linearGradient>
   <linearGradient id="pg2" gradientUnits="userSpaceOnUse" x1="559" y1="1165" x2="447" y2="1112.500">
    <stop offset="0" stop-color="#7c7c7c"/><stop offset="0.35" stop-color="#626262"/><stop offset="0.75" stop-color="#363636"/><stop offset="1" stop-color="#1c1c1c" stop-opacity="0"/>
   </linearGradient>
  </defs>
  <rect x="0.5" y="0.5" width="558" height="1164" rx="31" fill="#1c1c1c"/>
  <rect x="0.5" y="0.5" width="558" height="1164" rx="31" fill="url(#pg1)"/>
  <rect x="0.5" y="0.5" width="558" height="1164" rx="31" fill="url(#pg2)"/>
  <rect x="0.5" y="0.5" width="558" height="1164" rx="31" fill="none" stroke="#565656" stroke-width="1"/>
 </svg>
 <div class="abs" id="screen" style="left:157px;top:263.500px;width:517.800px;height:1124px;border-radius:16px;background:#ffffff;overflow:hidden;box-shadow:0 0 0 1px #161616">
  <div class="abs" style="left:0;top:0;width:220px;height:58px;border-radius:29px;background:#007dff"></div>
  <span class="t" id="btnt" style="left:23px;top:14px;font-size:24px;line-height:30px;color:#ffffff">son的weight300</span>
 </div>
</div>

<!-- ================= RIGHT TOOL STRIP ================= -->
<div id="rightbar">
 <!-- kit assistant icon -->
 <svg style="left:7px;top:16px" width="18" height="18" viewBox="0 0 20 20"><rect x="0.500" y="0.500" width="19" height="19" rx="2" fill="#afb1b3"/><rect x="3" y="3" width="14" height="2.200" fill="#3c3f41"/><path d="M7.500 14.500l3.500-3.500" stroke="#3c3f41" stroke-width="2" fill="none"/><circle cx="12.300" cy="9.700" r="2.600" fill="#3c3f41"/><rect x="12.300" y="6.200" width="3" height="2.400" fill="#afb1b3" transform="rotate(45 12.300 9.700)"/></svg>
 <span class="vt" id="rv1" style="left:25px;top:43px;transform:rotate(90deg);font-size:16.7px">Kit Assistant</span>
 <!-- bell -->
 <svg style="left:6px;top:168px" width="20" height="20" viewBox="0 0 20 20"><path d="M9.500 2.500c-3.500 0-5.500 2.500-5.500 6v4L2 15.500v1h15v-1l-2-3v-4c0-3.500-2-6-5.500-6z" fill="#afb1b3"/><path d="M7.500 17.500h4a2 2 0 0 1-4 0z" fill="#afb1b3"/><circle cx="15.500" cy="4" r="3.300" fill="#e05555"/></svg>
 <span class="vt" id="rv2" style="left:25px;top:194px;transform:rotate(90deg);font-size:17.4px">Notifications</span>
 <!-- active previewer tab -->
 <div class="abs" style="left:0px;top:306px;width:32px;height:102px;background:#2b2d30"></div>
 <svg style="left:6px;top:325px" width="20" height="13" viewBox="0 0 22 14"><path d="M0.500 7C3.500 2.500 7 0.500 11 0.500S18.500 2.500 21.500 7c-3 4.500-6.500 6.500-10.500 6.500S3.500 11.500 0.500 7z" fill="#c4c6c8"/><circle cx="11" cy="7" r="4.200" fill="#2b2d30"/><circle cx="11" cy="7" r="2.200" fill="#c4c6c8"/></svg>
 <span class="vt" id="rv3" style="left:25px;top:347px;transform:rotate(90deg);font-size:15.8px;color:#e8e8e8">预览器</span>
 <!-- device file browser -->
 <svg style="left:9px;top:1264px" width="14" height="19" viewBox="0 0 14 19" fill="none"><rect x="1.200" y="1.200" width="11.600" height="16.600" rx="1.500" stroke="#9aa7b0" stroke-width="2.200"/></svg>
 <span class="vt" id="rv4" style="left:25px;top:1292px;transform:rotate(90deg);font-size:16.4px">Device File Browser</span>
</div>

<!-- ================= BOTTOM TOOL WINDOW BAR ================= -->
<div id="bottombar">
 <!-- git branch -->
 <svg style="left:49px;top:8px" width="15" height="21" viewBox="0 0 15 21" fill="none" stroke="#afb1b3" stroke-width="2.300"><path d="M3.500 4v13M11.500 6.500c0 4.500-8 3.500-8 8"/><g fill="#afb1b3" stroke="none"><circle cx="3.500" cy="3.500" r="3"/><circle cx="3.500" cy="17.500" r="3"/><circle cx="11.500" cy="5.500" r="3"/></g></svg>
 <span class="bt" id="b1" style="left:72px">Git</span>
 <!-- migrate -->
 <svg style="left:128px;top:8px" width="23" height="19" viewBox="0 0 23 19"><path d="M0 0h8l2 2.500h9V5h-16.500v11H0z" fill="#afb1b3"/><rect x="4.500" y="4.500" width="18" height="14" fill="#afb1b3"/><path d="M7.500 11.500h9m-3.500-3.500l3.500 3.500-3.500 3.500" stroke="#3c3f41" stroke-width="1.800" fill="none"/></svg>
 <span class="bt" id="b2" style="left:158.500px">Migrate Assistant</span>
 <!-- profiler -->
 <svg style="left:326px;top:7px" width="22" height="22" viewBox="0 0 22 22"><path d="M21 1L0.500 8l6.500 2.800L18 3.500 9 12v8.500l3.500-5 4 2z" fill="#afb1b3"/></svg>
 <span class="bt" id="b3" style="left:354px">Profiler</span>
 <!-- build hammer -->
 <svg style="left:436px;top:8px" width="20" height="20" viewBox="0 0 20 20"><path d="M2 6.500L8 0.500l5 1.500-3 1 2.500 2.500-4.500 4.500L5.500 7.500 4 9z" fill="#afb1b3"/><path d="M9.500 8l8.500 9.500-2 2L7.500 10z" fill="#afb1b3"/></svg>
 <span class="bt" id="b4" style="left:462px;font-size:16.4px">构建</span>
 <!-- todo -->
 <svg style="left:525px;top:11px" width="16" height="14" viewBox="0 0 16 14" fill="#afb1b3"><rect x="0" y="0" width="3" height="3"/><rect x="4.500" y="0" width="11.500" height="3"/><rect x="0" y="5.500" width="3" height="3"/><rect x="4.500" y="5.500" width="11.500" height="3"/><rect x="0" y="11" width="3" height="3"/><rect x="4.500" y="11" width="11.500" height="3"/></svg>
 <span class="bt" id="b5" style="left:548px;letter-spacing:-0.55px">TODO</span>
 <!-- log -->
 <svg style="left:620px;top:7px" width="20" height="21" viewBox="0 0 20 21"><rect x="0.500" y="3" width="19" height="17.500" rx="1" fill="#afb1b3"/><rect x="3.500" y="0" width="3" height="5" fill="#afb1b3"/><rect x="13.500" y="0" width="3" height="5" fill="#afb1b3"/><rect x="3.500" y="8.500" width="9" height="2" fill="#3c3f41"/><rect x="3.500" y="12.500" width="13" height="2" fill="#3c3f41"/></svg>
 <span class="bt" id="b6" style="left:648px;font-size:16.4px">日志</span>
 <!-- problems -->
 <svg style="left:707px;top:9px" width="17" height="17" viewBox="0 0 17 17"><circle cx="8.500" cy="8.500" r="8.200" fill="#db5c5c"/><rect x="7.300" y="3.500" width="2.400" height="6.500" fill="#3c3f41"/><rect x="7.300" y="11.300" width="2.400" height="2.400" fill="#3c3f41"/></svg>
 <span class="bt" id="b7" style="left:731px;font-size:16.4px">问题</span>
 <!-- terminal -->
 <svg style="left:790px;top:10px" width="18" height="16" viewBox="0 0 18 16"><rect x="0" y="0" width="18" height="16" fill="#afb1b3"/><path d="M3 3.500l4 4-4 4" stroke="#3c3f41" stroke-width="1.800" fill="none"/><rect x="8" y="11" width="6" height="1.800" fill="#3c3f41"/></svg>
 <span class="bt" id="b8" style="left:815px;font-size:16.4px">终端</span>
 <!-- services -->
 <svg style="left:873px;top:8px" width="20" height="20" viewBox="0 0 20 20"><path d="M6 1h8l5 9-5 9H6L1 10z" fill="#afb1b3"/><path d="M7.500 5.500l7 4.500-7 4.500z" fill="#3c3f41"/></svg>
 <span class="bt" id="b9" style="left:899px;font-size:16.4px">服务</span>
 <!-- code linter -->
 <svg style="left:959px;top:7px" width="21" height="22" viewBox="0 0 21 22" fill="none"><circle cx="9" cy="9" r="7.800" stroke="#afb1b3" stroke-width="2"/><path d="M14.500 14.500l5.500 6" stroke="#afb1b3" stroke-width="2.600"/><path d="M6.500 6.500L4 9l2.500 2.500M11.500 6.500L14 9l-2.500 2.500M10 5.500l-2 7" stroke="#afb1b3" stroke-width="1.300"/></svg>
 <span class="bt" id="b10" style="left:986.500px">Code Linter</span>
 <!-- arkui inspector -->
 <svg style="left:1110px;top:9px" width="20" height="18" viewBox="0 0 20 18" fill="#afb1b3"><rect x="0" y="0" width="20" height="4.500"/><rect x="0" y="6.500" width="5.500" height="11.500"/><rect x="7.500" y="6.500" width="12.500" height="4.500"/><rect x="7.500" y="13" width="12.500" height="5"/></svg>
 <span class="bt" id="b11" style="left:1137px">ArkUI Inspector</span>
 <!-- previewer log -->
 <svg style="left:1289px;top:7px" width="18" height="21" viewBox="0 0 18 21" fill="none" stroke="#7f8183" stroke-width="1.500"><rect x="1" y="2.500" width="16" height="17.500" rx="2"/><path d="M5 0.500v4M13 0.500v4M4.500 9h9M4.500 12.500h9M4.500 16h6"/></svg>
 <span class="bt" id="b12" style="left:1314px;font-size:16.200px">预览器日志</span>
</div>

<!-- ================= STATUS BAR ================= -->
<div id="statusbar">
 <svg style="left:18px;top:5px" width="19" height="19" viewBox="0 0 19 19" fill="none" stroke="#afb1b3" stroke-width="1.500"><path d="M4.500 1h13.500v13.500H4.500z"/><path d="M1 4.500v13.500h13.500"/></svg>
 <span class="st" id="s1" style="left:59.5px;font-size:18.8px;letter-spacing:0.282px">Microsoft Defender configuration: The IDE has detected Microsoft Defender with Real-Time Protection enabled. It might severely degrade IDE performance. It is recommended to add the following... (33 minutes agc</span>
 <div class="abs" style="left:1940px;top:5px;width:18px;height:18px;border-radius:9px;background:#3aa93a"></div>
 <span class="st" id="s2" style="left:1977px;font-size:18px">15:1</span>
 <span class="st" id="s3" style="left:2033px;font-size:17.5px;letter-spacing:-0.6px">LF</span>
 <span class="st" id="s4" style="left:2070px;font-size:18.2px">UTF-8</span>
 <span class="st" id="s5" style="left:2141px;font-size:18px">2 spaces</span>
 <svg style="left:2235px;top:5px" width="14" height="19" viewBox="0 0 14 19" fill="none" stroke="#afb1b3" stroke-width="2"><path d="M3.500 4v12M10.500 6c0 4.500-7 3-7 7.500"/><g fill="#afb1b3" stroke="none"><circle cx="3.500" cy="3" r="2.600"/><circle cx="3.500" cy="16" r="2.600"/><circle cx="10.500" cy="4.500" r="2.600"/></g></svg>
 <span class="st" id="s6" style="left:2258px;font-size:17.8px">状态管理</span>
 <svg style="left:2343px;top:5px" width="18" height="19" viewBox="0 0 18 19"><rect x="4" y="8.500" width="13" height="10" fill="#afb1b3"/><path d="M2 9V5.500a3.500 3.500 0 0 1 7 0V9" stroke="#afb1b3" stroke-width="2" fill="none"/></svg>
 <div class="abs" style="left:2373px;top:0;width:147px;height:29px;background:#45494a"></div>
 <div class="abs" style="left:2373px;top:0;width:48px;height:29px;background:#505456"></div>
 <div class="abs" style="left:2373px;top:0;width:33px;height:29px;background:#5b5f61"></div>
 <span class="st" id="s7" style="left:2384px;font-size:19px;letter-spacing:0.36px">311,共1300M</span>
</div>

</body>
</html>
